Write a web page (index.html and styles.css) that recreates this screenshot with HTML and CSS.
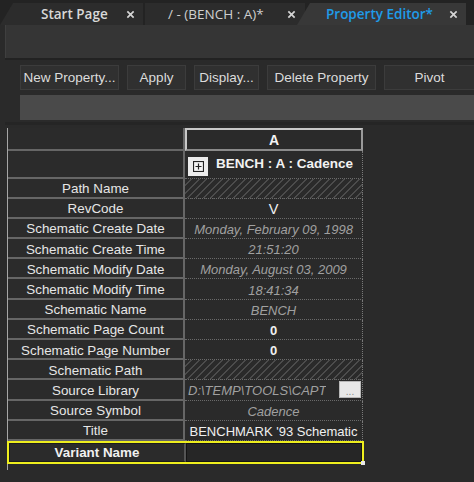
FILE: index.html
```html
<!DOCTYPE html>
<html>
<head>
<meta charset="utf-8">
<title>Property Editor</title>
<link rel="stylesheet" href="styles.css">
</head>
<body>
<div class="tabbar">
  <div class="tab tab-start"><span>Start Page</span><svg class="tab-x" viewBox="0 0 10 10"><path d="M1.5 1.5L8.5 8.5M8.5 1.5L1.5 8.5"/></svg></div>
  <div class="tab tab-doc"><span>/ - (BENCH : A)*</span><svg class="tab-x" viewBox="0 0 10 10"><path d="M1.5 1.5L8.5 8.5M8.5 1.5L1.5 8.5"/></svg></div>
  <div class="tab tab-active"><span>Property Editor*</span><svg class="tab-x" viewBox="0 0 10 10"><path d="M1.5 1.5L8.5 8.5M8.5 1.5L1.5 8.5"/></svg></div>
</div>
<div class="panel-head"></div>
<div class="toolbar">
  <div class="buttons">
    <button class="btn btn-new">New Property...</button>
    <button class="btn btn-apply">Apply</button>
    <button class="btn btn-display">Display...</button>
    <button class="btn btn-delete">Delete Property</button>
    <button class="btn btn-pivot">Pivot</button>
  </div>
  <div class="filter-bar"></div>
</div>
<div class="grid-area">
  <div class="sheet">
    <div class="row row-head">
      <div class="lbl"></div>
      <div class="colhead">A</div>
    </div>
    <div class="row row-bench">
      <div class="lbl"></div>
      <div class="val val-bench">
        <span class="expander"><svg viewBox="0 0 11 11"><rect x="0.5" y="0.5" width="10" height="10"/><path d="M5.5 2.5V8.5M2.5 5.5H8.5"/></svg></span>
        <span class="bench-name">BENCH : A : Cadence</span>
      </div>
    </div>
    <div class="row"><div class="lbl">Path Name</div><div class="val hatch"></div></div>
    <div class="row"><div class="lbl">RevCode</div><div class="val strong big">V</div></div>
    <div class="row"><div class="lbl">Schematic Create Date</div><div class="val dim">Monday, February 09, 1998</div></div>
    <div class="row"><div class="lbl">Schematic Create Time</div><div class="val dim">21:51:20</div></div>
    <div class="row"><div class="lbl">Schematic Modify Date</div><div class="val dim">Monday, August 03, 2009</div></div>
    <div class="row"><div class="lbl">Schematic Modify Time</div><div class="val dim">18:41:34</div></div>
    <div class="row"><div class="lbl">Schematic Name</div><div class="val dim">BENCH</div></div>
    <div class="row"><div class="lbl">Schematic Page Count</div><div class="val strong bold">0</div></div>
    <div class="row"><div class="lbl">Schematic Page Number</div><div class="val strong bold">0</div></div>
    <div class="row"><div class="lbl">Schematic Path</div><div class="val hatch"></div></div>
    <div class="row"><div class="lbl">Source Library</div><div class="val dim val-lib"><span class="lib-path">D:\TEMP\TOOLS\CAPT</span><span class="browse">...</span></div></div>
    <div class="row"><div class="lbl">Source Symbol</div><div class="val dim">Cadence</div></div>
    <div class="row"><div class="lbl">Title</div><div class="val strong">BENCHMARK '93 Schematic</div></div>
    <div class="row variant">
      <div class="lbl lbl-variant">Variant Name</div>
      <div class="val val-edit"></div>
      <span class="handle"></span>
    </div>
  </div>
</div>
</body>
</html>
```
FILE: styles.css
```css
body {
  margin: 0;
  width: 474px;
  height: 482px;
  overflow: hidden;
  background: #2a2a2a;
  font-family: "Liberation Sans", Arial, sans-serif;
}

/* Tabs */
.tabbar {
  height: 25px;
  background: #232323;
  display: flex;
  align-items: flex-end;
}
.tab {
  height: 22px;
  display: flex;
  align-items: center;
  box-sizing: border-box;
  font-family: "Open Sans", sans-serif;
  font-size: 13.5px;
  white-space: nowrap;
}
.tab-x {
  width: 9px;
  height: 9px;
  margin-left: auto;
  fill: none;
  stroke: #d4d4d4;
  stroke-width: 1.9;
}
.tab-start {
  width: 143px;
  padding: 0 8px 0 41px;
  background: #2c2c2c;
  color: #d8d8d8;
  font-weight: 600;
  clip-path: polygon(13px 0, 100% 0, 100% 100%, 0 100%);
}
.tab-doc {
  width: 160px;
  margin-left: 2px;
  padding: 0 9px 0 23px;
  background: #2c2c2c;
  color: #cfcfcf;
}
.tab-active {
  width: 169px;
  margin-left: -8px;
  padding: 0 8px 0 29px;
  background: #383838;
  color: #1f9be8;
  font-weight: 600;
  clip-path: polygon(13px 0, 100% 0, 100% 100%, 0 100%);
}

/* Panel header strip */
.panel-head {
  margin-left: 5px;
  height: 33px;
  background: #353535;
  border-left: 1px solid #3f3f3f;
}

/* Toolbar */
.toolbar {
  margin-left: 5px;
  border-top: 2px solid #222;
  border-bottom: 3px solid #252525;
  background: #2a2a2a;
  padding: 5px 0 2px 15px;
}
.buttons {
  display: flex;
  gap: 8px;
}
.btn {
  height: 25px;
  padding: 0;
  margin: 0;
  background: #303030;
  border: 1px solid #3c3c3c;
  border-radius: 0;
  color: #dcdcdc;
  font-family: "Liberation Sans", Arial, sans-serif;
  font-size: 13.5px;
  white-space: nowrap;
}
.btn-new { width: 99px; }
.btn-apply { width: 59px; }
.btn-display { width: 65px; }
.btn-delete { width: 109px; }
.btn-pivot { flex: 1; border-right: none; }
.filter-bar {
  margin-top: 5px;
  height: 25px;
  background: #4a4a4a;
}

/* Property grid */
.grid-area {
  padding: 3px 0 0 7px;
}
.sheet {
  border-left: 1px solid #a6a6a6;
  padding-bottom: 6px;
  width: 356px;
}
.row {
  display: flex;
  height: 20.2px;
}
.row-head { height: 23px; }
.row-bench { height: 27.5px; }
.lbl {
  width: 177px;
  flex: none;
  box-sizing: border-box;
  padding-top: 2px;
  border-right: 2px solid #666;
  border-bottom: 2px solid #666;
  background: #2b2b2b;
  color: #e6e6e6;
  font-size: 13.4px;
  display: flex;
  align-items: center;
  justify-content: center;
  white-space: nowrap;
}
.val {
  width: 178px;
  flex: none;
  box-sizing: border-box;
  padding-top: 2px;
  border-right: 1px dotted #7a7a7a;
  border-bottom: 1px dotted #6a6a6a;
  background: #2a2a2a;
  font-size: 13px;
  display: flex;
  align-items: center;
  justify-content: center;
  white-space: nowrap;
  overflow: hidden;
}
.colhead {
  width: 178px;
  box-sizing: border-box;
  border: 2px solid #c8c8c8;
  border-right-color: #9a9a9a;
  border-bottom-color: #8a8a8a;
  color: #f4f4f4;
  font-weight: bold;
  font-size: 14px;
  display: flex;
  align-items: center;
  justify-content: center;
}
.val-bench {
  justify-content: flex-start;
  align-items: flex-start;
  padding: 5px 0 0 3px;
}
.expander {
  width: 20px;
  height: 19px;
  margin-top: 1px;
  background: #ececec;
  display: flex;
  align-items: center;
  justify-content: center;
  flex: none;
}
.expander svg {
  width: 11px;
  height: 11px;
  fill: #f4f4f4;
  stroke: #222;
  stroke-width: 1.2;
}
.bench-name {
  margin-left: 8px;
  color: #f2f2f2;
  font-weight: bold;
  font-size: 13.5px;
}
.hatch {
  background: repeating-linear-gradient(135deg, #2a2a2a 0 4px, #4c4c4c 4px 5.4px);
}
.strong { color: #f0f0f0; }
.big { font-size: 14.5px; }
.bold { font-weight: bold; }
.dim {
  color: #a0a0a0;
  font-style: italic;
}
.val-lib {
  justify-content: space-between;
  padding-left: 3px;
  padding-top: 0;
}
.lib-path { overflow: hidden; padding-top: 2px; }
.browse {
  width: 22px;
  height: 17px;
  margin-right: 1px;
  box-sizing: border-box;
  background: #e8e8e8;
  border: 1px solid #b8b8b8;
  color: #8a8a8a;
  font-style: normal;
  font-size: 10px;
  line-height: 20px;
  text-align: center;
  flex: none;
}

/* Selected row */
.variant {
  position: relative;
  height: 23px;
  width: 357px;
  margin-left: -1px;
  box-sizing: border-box;
  border: 2px solid #eeee1e;
}
.lbl-variant {
  width: 177px;
  padding-top: 0;
  border: 1px solid #1c1c1c;
  border-right: 2px solid #555;
  font-weight: bold;
  color: #f0f0f0;
}
.val-edit {
  flex: 1;
  width: auto;
  padding-top: 0;
  border: 1px solid #141414;
  background: #262626;
}
.handle {
  position: absolute;
  right: -3px;
  bottom: -3px;
  width: 4px;
  height: 4px;
  background: #e8e8e8;
}
```
